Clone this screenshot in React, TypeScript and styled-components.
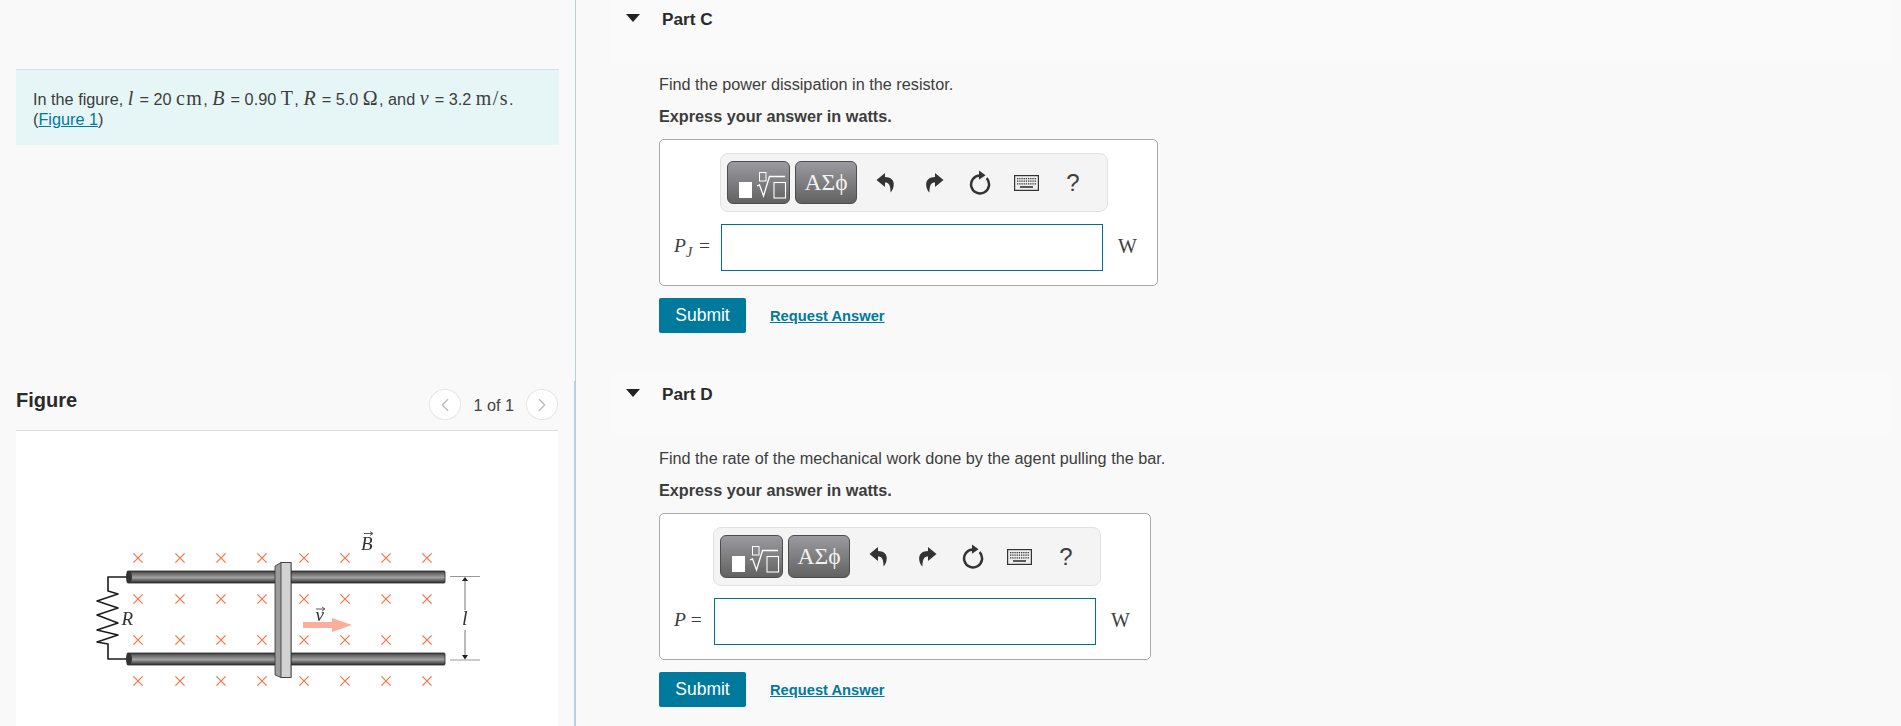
import React from "react";
import styled, { createGlobalStyle } from "styled-components";
import { ChevronLeft, ChevronRight } from "lucide-react";

const Global = createGlobalStyle`
  html, body { margin: 0; padding: 0; height: 100%; background: #f9f9f9; overflow: hidden; }
  #root { height: 100%; }
  * { box-sizing: border-box; }
`;

const Page = styled.div`
  display: flex;
  width: 1901px;
  height: 726px;
  overflow: hidden;
  font-family: "Liberation Sans", Arial, sans-serif;
  font-size: 16.24px;
  color: #3d3d3d;
  background: #f9f9f9;
`;

const LeftColumn = styled.div`
  width: 575px;
  flex: none;
  padding: 69px 16px 0 16px;
  display: flex;
  flex-direction: column;
`;

const Intro = styled.div`
  width: 543px;
  height: 76px;
  background: #e6f6f7;
  border-top: 1px solid #d5dfe2;
  padding: 18px 17px 0;
  line-height: 20px;
`;

const M = styled.span`
  font-family: "Liberation Serif", "DejaVu Serif", serif;
  font-size: 20px;
  line-height: 1;
  letter-spacing: 1.4px;
`;
const MI = styled(M)`
  font-style: italic;
  letter-spacing: 1.6px;
`;

const StyledLink = styled.a`
  color: #007a9c;
  text-decoration: underline;
`;

const FigureHeader = styled.div`
  margin-top: 235px;
  width: 542px;
  height: 51px;
  border-bottom: 1px solid #dcdcdc;
  display: flex;
  align-items: flex-start;
  justify-content: space-between;
`;

const FigureTitle = styled.div`
  font-size: 20px;
  font-weight: 700;
  color: #2a2a2a;
  line-height: 22px;
  margin-top: 9px;
`;

const Pager = styled.div`
  display: flex;
  align-items: center;
  gap: 12px;
  margin-top: 9px;
  color: #444;
`;

const PagerLabel = styled.span`
  padding-top: 2px;
`;

const Round = styled.div`
  width: 32px;
  height: 31px;
  border-radius: 50%;
  background: #fff;
  border: 1px solid #e6e6e6;
  display: flex;
  align-items: center;
  justify-content: center;
  color: #b8b8b8;
`;

const FigureBody = styled.div`
  width: 542px;
  flex: 1;
  background: #fff;
  position: relative;
`;

const FigureDrawing = styled.svg`
  display: block;
  position: absolute;
  left: 64px;
  top: 79px;
`;

const RightColumn = styled.div`
  flex: 1;
  min-width: 0;
  position: relative;
  padding: 0 11px 0 34px;
  border-left: 1px solid #b9cde3;

  &::before {
    content: "";
    position: absolute;
    left: -2px;
    top: 381px;
    bottom: 0;
    width: 1px;
    background: #b9cde3;
  }
`;

const Part = styled.section`
  height: 374px;
`;

const PartHeader = styled.div<{ $offset: number }>`
  height: 64px;
  background: #fafafa;
  display: flex;
  align-items: flex-start;
  padding: ${(p) => p.$offset}px 0 0 16px;
`;

const Caret = styled.div`
  width: 0;
  height: 0;
  margin-top: 14px;
  border-left: 7px solid transparent;
  border-right: 7px solid transparent;
  border-top: 8px solid #222;
`;

const PartTitle = styled.div`
  margin-left: 22px;
  margin-top: 9px;
  font-size: 17.2px;
  font-weight: 700;
  color: #2a2a2a;
  line-height: 20px;
`;

const PartBody = styled.div`
  padding-left: 49px;
`;

const Question = styled.p`
  margin: 10px 0 0;
  line-height: 20px;
`;

const Instruction = styled.p`
  margin: 12px 0 0;
  line-height: 20px;
  font-weight: 700;
`;

const AnswerBox = styled.div<{ $w: number }>`
  width: ${(p) => p.$w}px;
  height: 147px;
  margin-top: 13px;
  background: #fff;
  border: 1px solid #aaa;
  border-radius: 5px;
  padding: 13px 0 0 ${(p) => p.$w - 439}px;
`;

const Toolbar = styled.div`
  width: 388px;
  height: 59px;
  background: #f4f4f4;
  border: 1px solid #e2e2e2;
  border-radius: 8px;
  display: flex;
  align-items: center;
  padding-left: 6px;
  gap: 5px;
`;

const TemplateButton = styled.div<{ $w: number }>`
  width: ${(p) => p.$w}px;
  height: 43px;
  flex: none;
  border-radius: 6px;
  border: 1px solid #4d4d4d;
  background: linear-gradient(#9b9a9f, #626262);
  display: flex;
  align-items: center;
  justify-content: center;
  color: #f2f2f2;
  font-family: "Liberation Serif", serif;
  font-size: 23.5px;
`;

const ToolIcons = styled.div`
  display: flex;
  align-items: center;
  margin-left: -5px;
  color: #333;
`;

const ToolSlot = styled.div<{ $w: number }>`
  width: ${(p) => p.$w}px;
  display: flex;
  justify-content: center;
`;

const Help = styled.span`
  font-size: 24px;
  line-height: 24px;
  color: #3d3d3d;
`;

const InputRow = styled.div<{ $label: number }>`
  display: flex;
  align-items: center;
  margin-top: 12px;
  margin-left: ${(p) => 1 - p.$label}px;
`;

const VarLabel = styled.div<{ $w: number }>`
  width: ${(p) => p.$w}px;
  padding: 0 0 3px 14px;
  font-family: "Liberation Serif", serif;
  font-size: 19.5px;
  white-space: nowrap;
`;

const Sub = styled.sub`
  font-size: 14px;
  font-style: italic;
  line-height: 0;
  margin-right: 2px;
`;

const AnswerInput = styled.div`
  width: 382px;
  height: 47px;
  background: #fff;
  border: 1px solid #00708f;
`;

const Unit = styled.div`
  margin-left: 15px;
  padding-bottom: 3px;
  font-family: "Liberation Serif", serif;
  font-size: 20px;
  color: #3d3d3d;
`;

const Actions = styled.div`
  display: flex;
  align-items: center;
  margin-top: 12px;
  gap: 24px;
`;

const SubmitButton = styled.div`
  width: 87px;
  height: 35px;
  background: #007a9c;
  color: #fff;
  border-radius: 2px;
  font-size: 17.5px;
  display: flex;
  align-items: center;
  justify-content: center;
`;

const RequestLink = styled.a`
  color: #007a9c;
  font-weight: 700;
  font-size: 14.7px;
  text-decoration: underline;
`;

const UndoIcon = ({ flip }: { flip?: boolean }) => (
  <svg width="20" height="21" viewBox="0 0 20 21" style={flip ? { transform: "scaleX(-1)" } : undefined}>
    <path d="M9 1 L0.5 8 L9 15 V10.6 C12.6 10.6 14.4 12.4 14.6 20.6 C19.2 15 20 5.2 9 4.9 Z" fill="#333" />
  </svg>
);

const RefreshIcon = () => (
  <svg width="24" height="25" viewBox="0 0 24 25">
    <path d="M12 5.4 A9 9 0 1 0 18.6 8.2" fill="none" stroke="#333" strokeWidth="2.5" />
    <path d="M11 0.5 L17.5 5.2 L11 9.8 Z" fill="#333" />
  </svg>
);

const KeyboardIcon = () => (
  <svg width="25" height="16" viewBox="0 0 25 16">
    <rect x="0.6" y="0.6" width="23.8" height="14.8" fill="#eee" stroke="#333" strokeWidth="1.2" />
    <path d="M3 3.6 H22 M3 6.2 H22 M3 8.8 H22" stroke="#333" strokeWidth="1.3" strokeDasharray="1.3 0.9" />
    <path d="M6 12 H19" stroke="#333" strokeWidth="1.6" />
  </svg>
);

const TemplateIcon = () => (
  <svg width="61" height="41" viewBox="0 0 61 41">
    <rect x="11" y="20" width="13" height="16" fill="#fff" />
    <rect x="31.5" y="10.5" width="6.5" height="8.5" fill="none" stroke="#fff" strokeWidth="1" />
    <path d="M29 24 L31.5 22.8 L35.5 34 L41.5 14.5 H57" fill="none" stroke="#fff" strokeWidth="1.3" />
    <rect x="46" y="20.5" width="11.5" height="15.5" fill="none" stroke="#fff" strokeWidth="1.1" />
  </svg>
);

const ROWS = [48, 89, 130, 171];
const COLS = [58, 100, 141, 182, 224, 265, 306, 347];
const SERIF = "'Liberation Serif', serif";

const CircuitFigure = () => (
  <FigureDrawing width="420" height="216" viewBox="0 0 420 216">
    <defs>
      <linearGradient id="rail" x1="0" y1="0" x2="0" y2="1">
        <stop offset="0" stopColor="#3a3a3a" />
        <stop offset="0.25" stopColor="#707070" />
        <stop offset="0.55" stopColor="#a2a2a2" />
        <stop offset="0.8" stopColor="#5e5e5e" />
        <stop offset="1" stopColor="#2e2e2e" />
      </linearGradient>
      <filter id="soft">
        <feGaussianBlur stdDeviation="0.35" />
      </filter>
    </defs>
    <g filter="url(#soft)">
      {ROWS.map((y) =>
        COLS.map((x) => (
          <path
            key={`${x}-${y}`}
            d={`M${x - 4.6} ${y - 4.6} L${x + 4.6} ${y + 4.6} M${x + 4.6} ${y - 4.6} L${x - 4.6} ${y + 4.6}`}
            stroke="#f5764f"
            strokeWidth="1.3"
          />
        ))
      )}
      <path
        d="M47 67 H28 V81 L38 84 L17 91 L38 98 L17 105 L38 113 L17 120 L38 125 L17 132 L28 134 V149 H47"
        fill="none"
        stroke="#1c1c1c"
        strokeWidth="1.6"
        strokeLinejoin="round"
      />
      <rect x="47" y="61" width="318" height="12" rx="1" fill="url(#rail)" stroke="#2a2a2a" strokeWidth="0.8" />
      <rect x="47" y="143" width="318" height="12" rx="1" fill="url(#rail)" stroke="#2a2a2a" strokeWidth="0.8" />
      <ellipse cx="49" cy="67" rx="3" ry="6" fill="#333" />
      <ellipse cx="49" cy="149" rx="3" ry="6" fill="#333" />
      <path d="M195 56 L201 52.5 H211 V167.5 H201 L195 165 Z" fill="#9c9c9c" stroke="#333" strokeWidth="0.8" />
      <rect x="201" y="52.5" width="10" height="115" fill="#d2d2d2" stroke="#333" strokeWidth="0.8" />
      <path d="M370 66.5 H400 M370 150 H400" stroke="#999" strokeWidth="1.2" />
      <path d="M385 70 V100 M385 120 V147" stroke="#777" strokeWidth="1" />
      <path d="M382 71 L385 67 L388 71 Z M382 145 L385 149.5 L388 145 Z" fill="#222" />
      <path d="M223 112 H252 V108 L272 115 L252 122 V118 H223 Z" fill="#fbae9b" />
      <path d="M236 99 H244 M242 97 L245 99 L242 101" stroke="#333" strokeWidth="0.8" fill="none" />
      <path d="M284 23.5 H292 M290 21.5 L293 23.5 L290 25.5" stroke="#333" strokeWidth="0.8" fill="none" />
      <text x="281" y="40" fontFamily={SERIF} fontStyle="italic" fontSize="19" fill="#333">B</text>
      <text x="235.5" y="111" fontFamily={SERIF} fontStyle="italic" fontSize="19" fill="#333">v</text>
      <text x="41.5" y="115" fontFamily={SERIF} fontStyle="italic" fontSize="19" fill="#333">R</text>
      <text x="382" y="115" fontFamily={SERIF} fontStyle="italic" fontSize="20" fill="#333">l</text>
    </g>
  </FigureDrawing>
);

const SLOTS = [57, 40, 52, 40, 54];

const Answer = ({ w, labelW, label }: { w: number; labelW: number; label: React.ReactNode }) => (
  <AnswerBox $w={w}>
    <Toolbar>
      <TemplateButton $w={63}>
        <TemplateIcon />
      </TemplateButton>
      <TemplateButton $w={62}>ΑΣϕ</TemplateButton>
      <ToolIcons>
        <ToolSlot $w={SLOTS[0]}>
          <UndoIcon />
        </ToolSlot>
        <ToolSlot $w={SLOTS[1]}>
          <UndoIcon flip />
        </ToolSlot>
        <ToolSlot $w={SLOTS[2]}>
          <RefreshIcon />
        </ToolSlot>
        <ToolSlot $w={SLOTS[3]}>
          <KeyboardIcon />
        </ToolSlot>
        <ToolSlot $w={SLOTS[4]}>
          <Help>?</Help>
        </ToolSlot>
      </ToolIcons>
    </Toolbar>
    <InputRow $label={labelW}>
      <VarLabel $w={labelW}>{label}</VarLabel>
      <AnswerInput />
      <Unit>W</Unit>
    </InputRow>
  </AnswerBox>
);

const PartBlock = ({
  name,
  offset,
  question,
  w,
  labelW,
  label,
}: {
  name: string;
  offset: number;
  question: string;
  w: number;
  labelW: number;
  label: React.ReactNode;
}) => (
  <Part>
    <PartHeader $offset={offset}>
      <Caret />
      <PartTitle>{name}</PartTitle>
    </PartHeader>
    <PartBody>
      <Question>{question}</Question>
      <Instruction>Express your answer in watts.</Instruction>
      <Answer w={w} labelW={labelW} label={label} />
      <Actions>
        <SubmitButton>Submit</SubmitButton>
        <RequestLink href="#">Request Answer</RequestLink>
      </Actions>
    </PartBody>
  </Part>
);

export default function App() {
  return (
    <Page>
      <Global />
      <LeftColumn>
        <Intro>
          In the figure, <MI>l</MI> = 20 <M>cm</M>, <MI>B</MI> = 0.90 <M>T</M>, <MI>R</MI> = 5.0 <M>Ω</M>, and{" "}
          <MI>v</MI> = 3.2 <M>m/s</M>.
          <br />(<StyledLink href="#">Figure 1</StyledLink>)
        </Intro>
        <FigureHeader>
          <FigureTitle>Figure</FigureTitle>
          <Pager>
            <Round>
              <ChevronLeft size={22} strokeWidth={1.3} />
            </Round>
            <PagerLabel>1 of 1</PagerLabel>
            <Round>
              <ChevronRight size={22} strokeWidth={1.3} />
            </Round>
          </Pager>
        </FigureHeader>
        <FigureBody>
          <CircuitFigure />
        </FigureBody>
      </LeftColumn>
      <RightColumn>
        <PartBlock
          name="Part C"
          offset={0}
          question="Find the power dissipation in the resistor."
          w={499}
          labelW={61}
          label={
            <>
              <i>P</i>
              <Sub>J</Sub> =
            </>
          }
        />
        <PartBlock
          name="Part D"
          offset={1}
          question="Find the rate of the mechanical work done by the agent pulling the bar."
          w={492}
          labelW={54}
          label={
            <>
              <i>P</i> =
            </>
          }
        />
      </RightColumn>
    </Page>
  );
}
